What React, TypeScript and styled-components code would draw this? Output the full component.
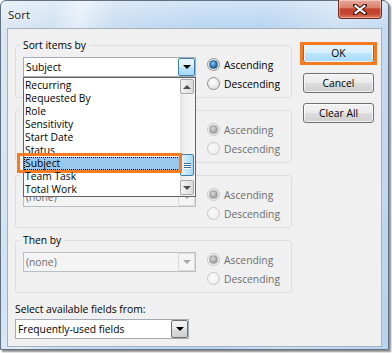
import React from "react";
import styled, { createGlobalStyle, css } from "styled-components";

const GlobalStyle = createGlobalStyle`
  html, body { margin: 0; padding: 0; background: #ffffff; }
  body { width: 392px; height: 353px; overflow: hidden; font-family: "Open Sans", "Noto Sans", sans-serif; font-size: 10.3px; color: #000; }
  * { box-sizing: border-box; }
`;

const Page = styled.div`
  width: 392px;
  height: 353px;
`;

const Window = styled.div`
  width: 389px;
  height: 350px;
  display: flex;
  flex-direction: column;
  border-radius: 6px 6px 0 0;
  border: 1px solid #5f7183;
  background:
    linear-gradient(180deg, rgba(255,255,255,0.35) 0px, rgba(255,255,255,0) 26px),
    linear-gradient(100deg, #dfe9f3 0%, #d2e2f2 12%, #e4eef8 18%, #c9ddf2 26%, #bcd7f2 45%, #b9d5f1 60%, #cfe1f3 76%, #c3daf1 88%, #b8d3ee 100%);
  box-shadow: 2px 2px 2px rgba(0, 0, 0, 0.45);
`;

const TitleBar = styled.div`
  height: 27px;
  display: flex;
  justify-content: space-between;
  align-items: flex-start;
  padding-left: 7px;
`;

const Title = styled.div`
  margin-top: 7px;
  font-size: 11.5px;
  line-height: 14px;
  color: #1b1b1b;
  text-shadow: 0 0 6px rgba(255,255,255,0.95), 0 0 3px rgba(255,255,255,0.9);
`;

const CloseButton = styled.div`
  width: 44px;
  height: 19px;
  margin-right: 6px;
  margin-top: -1px;
  border: 1px solid #6b2b23;
  border-top: none;
  border-radius: 0 0 4px 4px;
  background: linear-gradient(180deg, #e9a99b 0%, #d9826f 42%, #c3412c 50%, #c5462f 75%, #dd7a5c 100%);
  box-shadow: inset 0 0 0 1px rgba(255,255,255,0.35);
  display: flex;
  align-items: center;
  justify-content: center;
`;

const Panel = styled.div`
  margin: 0 6px 0 6px;
  height: 319px;
  background: #f0f0f0;
  border: 1px solid #a3b1bf;
  display: flex;
  align-items: flex-start;
  padding: 9px 0 0 7px;
`;

const LeftCol = styled.div`
  width: 277px;
  display: flex;
  flex-direction: column;
`;

const ButtonCol = styled.div`
  width: 71px;
  margin-left: 11px;
  padding-top: 5px;
  display: flex;
  flex-direction: column;
  gap: 10px;
`;

const Group = styled.fieldset`
  height: 60px;
  margin: 0;
  padding: 5px 0 0 7px;
  min-width: 0;
  border: 1px solid #d5dfe5;
  border-radius: 3px;
  & + & { margin-top: 5px; }
`;

const Legend = styled.legend<{ $covered?: boolean }>`
  padding: 0 3px;
  margin-left: -3px;
  line-height: 14px;
  color: #000;
  visibility: ${(p) => (p.$covered ? "hidden" : "visible")};
`;

const Row = styled.div`
  display: flex;
  align-items: flex-start;
`;

const Combo = styled.div<{ $disabled?: boolean; $width?: number }>`
  position: relative;
  width: ${(p) => p.$width ?? 173}px;
  height: 20px;
  flex: none;
  display: flex;
  align-items: center;
  justify-content: space-between;
  padding-left: 2px;
  border: 1px solid ${(p) => (p.$disabled ? "#b7c0c9" : "#a5acb5")};
  background: ${(p) => (p.$disabled ? "#f4f4f4" : "#ffffff")};
  color: ${(p) => (p.$disabled ? "#6d6d6d" : "#000")};
  line-height: 14px;
`;

const ComboText = styled.span<{ $covered?: boolean }>`
  visibility: ${(p) => (p.$covered ? "hidden" : "visible")};
`;

const ComboButton = styled.div<{ $variant: "hot" | "normal" | "disabled" }>`
  width: 17px;
  height: 18px;
  display: flex;
  align-items: center;
  justify-content: center;
  border-radius: 2px;
  ${(p) =>
    p.$variant === "hot"
      ? css`
          border: 1px solid #3c7fb1;
          background: linear-gradient(180deg, #eaf6fd 0%, #d9f0fc 50%, #bee6fd 51%, #a7d9f5 100%);
        `
      : p.$variant === "normal"
      ? css`
          border: 1px solid #707070;
          background: linear-gradient(180deg, #f2f2f2 0%, #ebebeb 50%, #dddddd 51%, #cfcfcf 100%);
        `
      : css`
          border: 1px solid #d9d9d9;
          background: #f4f4f4;
        `}
`;

const Arrow = styled.span<{ $color?: string; $up?: boolean }>`
  width: 0;
  height: 0;
  border-left: 4px solid transparent;
  border-right: 4px solid transparent;
  ${(p) =>
    p.$up
      ? css`border-bottom: 4px solid ${p.$color ?? "#000"};`
      : css`border-top: 4px solid ${p.$color ?? "#000"};`}
`;

const RadioCol = styled.div`
  margin-left: 11px;
  margin-top: -2px;
  display: flex;
  flex-direction: column;
`;

const RadioRow = styled.div<{ $disabled?: boolean }>`
  height: 19px;
  display: flex;
  align-items: center;
  gap: 4px;
  color: ${(p) => (p.$disabled ? "#6d6d6d" : "#000")};
  line-height: 14px;
`;

const RadioCircle = styled.span<{ $checked?: boolean; $disabled?: boolean }>`
  width: 13px;
  height: 13px;
  border-radius: 50%;
  flex: none;
  display: flex;
  align-items: center;
  justify-content: center;
  border: 1px solid ${(p) => (p.$disabled ? "#c8c8c8" : "#8e8f8f")};
  background: ${(p) =>
    p.$disabled
      ? "radial-gradient(circle at 40% 35%, #fafafa 0%, #f0f0f0 60%, #e6e6e6 100%)"
      : "radial-gradient(circle at 40% 35%, #ffffff 0%, #e8e8e8 60%, #d4d4d4 100%)"};
  &::after {
    content: "";
    display: ${(p) => (p.$checked ? "block" : "none")};
    width: 7px;
    height: 7px;
    border-radius: 50%;
    background: ${(p) =>
      p.$disabled
        ? "radial-gradient(circle at 40% 35%, #d8d8d8 0%, #a8a8a8 60%, #8c8c8c 100%)"
        : "radial-gradient(circle at 40% 35%, #8ecbf0 0%, #2f73ad 55%, #164b7c 100%)"};
    border: 1px solid ${(p) => (p.$disabled ? "#9a9a9a" : "#1e5a8c")};
  }
`;

const DropList = styled.div`
  position: absolute;
  top: 19px;
  left: -1px;
  width: 173px;
  height: 120px;
  z-index: 5;
  background: #fff;
  border: 1px solid #646464;
  display: flex;
  color: #000;
`;

const Items = styled.div`
  flex: 1;
  padding-top: 1px;
  display: flex;
  flex-direction: column;
`;

const Item = styled.div<{ $selected?: boolean }>`
  position: relative;
  height: 13px;
  line-height: 13px;
  padding-left: 1px;
  white-space: nowrap;
  ${(p) =>
    p.$selected &&
    css`
      background: #99c9ef;
      outline: 1px dotted #000;
      outline-offset: -1px;
      &::after {
        content: "";
        position: absolute;
        inset: -4px -2px -3px -7px;
        border: 3px solid #f47b20;
      }
    `}
`;

const ScrollBar = styled.div`
  width: 15px;
  flex: none;
  display: flex;
  flex-direction: column;
  padding: 1px 1px 1px 0;
  background: linear-gradient(90deg, #e3e3e3 0%, #f0f0f0 30%, #f4f4f4 100%);
`;

const ScrollBtn = styled.div`
  height: 15px;
  flex: none;
  border: 1px solid #a8a8a8;
  border-radius: 2px;
  background: linear-gradient(90deg, #f3f3f3 0%, #e9e9e9 50%, #d9d9d9 100%);
  display: flex;
  align-items: center;
  justify-content: center;
`;

const Track = styled.div`
  flex: 1;
  display: flex;
  flex-direction: column;
`;

const Thumb = styled.div`
  height: 22px;
  border: 1px solid #3c7fb1;
  border-radius: 2px;
  background: linear-gradient(90deg, #e3f4fc 0%, #c4e5f6 50%, #a9d9f2 100%);
  display: flex;
  flex-direction: column;
  align-items: center;
  justify-content: center;
  gap: 1px;
`;

const Grip = styled.span`
  width: 7px;
  height: 1px;
  background: #3c6f9a;
  box-shadow: 0 1px 0 #ffffff;
`;

const Button = styled.div<{ $default?: boolean; $marked?: boolean }>`
  position: relative;
  height: 20px;
  border-radius: 3px;
  display: flex;
  align-items: center;
  justify-content: center;
  line-height: 14px;
  color: #000;
  border: 1px solid ${(p) => (p.$default ? "#3c7fb1" : "#707070")};
  background: ${(p) =>
    p.$default
      ? "linear-gradient(180deg, #e5f4fc 0%, #d7eefb 50%, #bde6fd 51%, #a7d9f5 100%)"
      : "linear-gradient(180deg, #f2f2f2 0%, #ebebeb 50%, #dddddd 51%, #cfcfcf 100%)"};
  box-shadow: inset 0 0 0 1px rgba(255, 255, 255, 0.7);
  ${(p) =>
    p.$marked &&
    css`
      &::after {
        content: "";
        position: absolute;
        inset: -2px -4px -3px -4px;
        border: 3px solid #f47b20;
      }
    `}
`;

const FieldsLabel = styled.div`
  margin-top: 9px;
  line-height: 14px;
`;

const BottomCombo = styled(Combo)`
  margin-top: 3px;
  padding-left: 2px;
`;

const CloseX = () => (
  <svg width="14" height="11" viewBox="0 0 14 11">
    <path d="M2 1.5 L12 9.5 M12 1.5 L2 9.5" stroke="#3a0e08" strokeWidth="4" strokeLinecap="square" />
    <path d="M2.5 2 L11.5 9 M11.5 2 L2.5 9" stroke="#ffffff" strokeWidth="2.2" strokeLinecap="square" />
  </svg>
);

const listItems = [
  "Recurring",
  "Requested By",
  "Role",
  "Sensitivity",
  "Start Date",
  "Status",
  "Subject",
  "Team Task",
  "Total Work",
];

const SortRadios = ({ disabled }: { disabled?: boolean }) => (
  <RadioCol>
    <RadioRow $disabled={disabled}>
      <RadioCircle $checked $disabled={disabled} />
      Ascending
    </RadioRow>
    <RadioRow $disabled={disabled}>
      <RadioCircle $disabled={disabled} />
      Descending
    </RadioRow>
  </RadioCol>
);

const DisabledCombo = ({ covered }: { covered?: boolean }) => (
  <Combo $disabled>
    <ComboText $covered={covered}>(none)</ComboText>
    <ComboButton $variant="disabled">
      <Arrow $color="#a7a7a7" />
    </ComboButton>
  </Combo>
);

export default function App() {
  return (
    <Page>
      <GlobalStyle />
      <Window>
        <TitleBar>
          <Title>Sort</Title>
          <CloseButton>
            <CloseX />
          </CloseButton>
        </TitleBar>
        <Panel>
          <LeftCol>
            <Group>
              <Legend>Sort items by</Legend>
              <Row>
                <Combo>
                  <ComboText>Subject</ComboText>
                  <ComboButton $variant="hot">
                    <Arrow />
                  </ComboButton>
                  <DropList>
                    <Items>
                      {listItems.map((it) => (
                        <Item key={it} $selected={it === "Subject"}>
                          {it}
                        </Item>
                      ))}
                    </Items>
                    <ScrollBar>
                      <ScrollBtn>
                        <Arrow $up $color="#4d4d4d" />
                      </ScrollBtn>
                      <Track>
                        <Thumb style={{ marginTop: 60 }}>
                          <Grip />
                          <Grip />
                          <Grip />
                        </Thumb>
                      </Track>
                      <ScrollBtn>
                        <Arrow $color="#4d4d4d" />
                      </ScrollBtn>
                    </ScrollBar>
                  </DropList>
                </Combo>
                <SortRadios />
              </Row>
            </Group>
            <Group>
              <Legend $covered>Then by</Legend>
              <Row>
                <DisabledCombo covered />
                <SortRadios disabled />
              </Row>
            </Group>
            <Group>
              <Legend $covered>Then by</Legend>
              <Row>
                <DisabledCombo />
                <SortRadios disabled />
              </Row>
            </Group>
            <Group>
              <Legend>Then by</Legend>
              <Row>
                <DisabledCombo />
                <SortRadios disabled />
              </Row>
            </Group>
            <FieldsLabel>Select available fields from:</FieldsLabel>
            <BottomCombo $width={174}>
              <ComboText>Frequently-used fields</ComboText>
              <ComboButton $variant="normal">
                <Arrow />
              </ComboButton>
            </BottomCombo>
          </LeftCol>
          <ButtonCol>
            <Button $default $marked>OK</Button>
            <Button>Cancel</Button>
            <Button>Clear All</Button>
          </ButtonCol>
        </Panel>
      </Window>
    </Page>
  );
}
